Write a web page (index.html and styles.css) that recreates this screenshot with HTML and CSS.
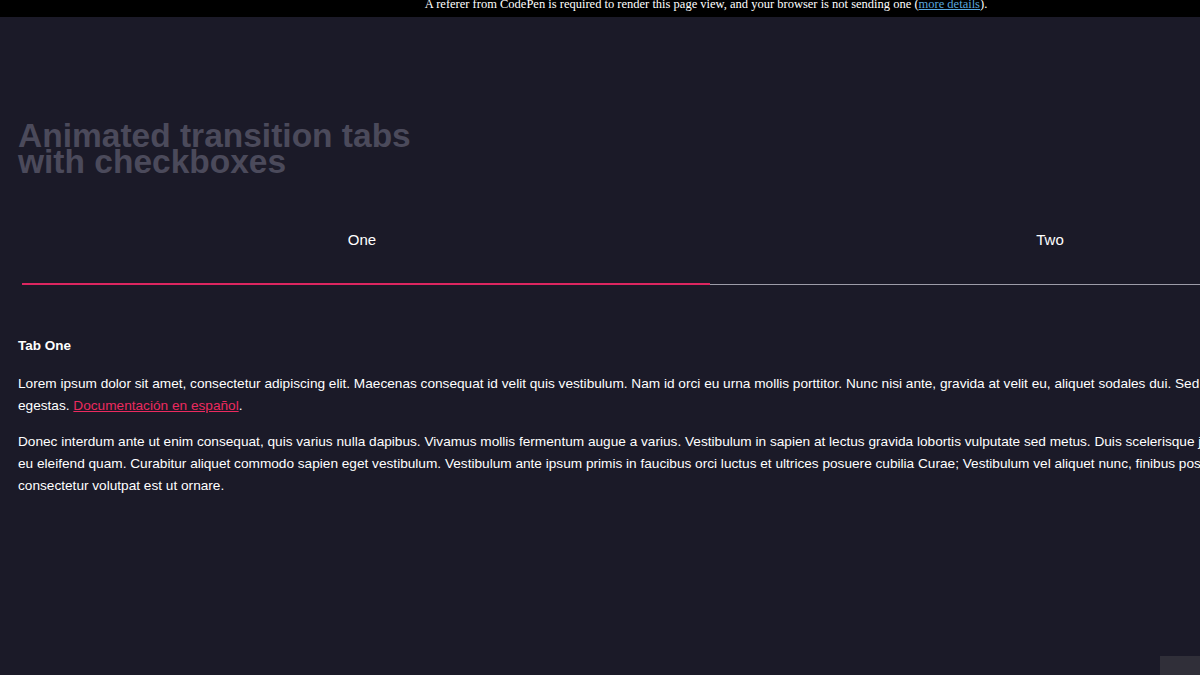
FILE: index.html
```html
<!DOCTYPE html>
<html lang="en">
<head>
<meta charset="utf-8">
<title>Animated transition tabs with checkboxes</title>
<link rel="stylesheet" href="styles.css">
</head>
<body>
<div class="sheet">
  <div class="referer-bar">
    <p class="referer-text">A referer from CodePen is required to render this page view, and your browser is not sending one (<a href="#">more details</a>).</p>
  </div>
  <main class="page">
    <h1 class="title">Animated transition tabs<br>with checkboxes</h1>
    <div class="tabs">
      <input type="checkbox" class="tab-toggle" id="tab-two">
      <div class="tab-labels">
        <span class="tab-label">One</span>
        <label class="tab-label" for="tab-two">Two</label>
      </div>
      <div class="tab-track"><span class="tab-indicator"></span></div>
    </div>
    <section class="panel">
      <h2 class="panel-title">Tab One</h2>
      <p>Lorem ipsum dolor sit amet, consectetur adipiscing elit. Maecenas consequat id velit quis vestibulum. Nam id orci eu urna mollis porttitor. Nunc nisi ante, gravida at velit eu, aliquet sodales dui. Sed laoreet condimentum ut nulla egestas. <a href="#">Documentación en español</a>.</p>
      <p>Donec interdum ante ut enim consequat, quis varius nulla dapibus. Vivamus mollis fermentum augue a varius. Vestibulum in sapien at lectus gravida lobortis vulputate sed metus. Duis scelerisque justo sed lacinia ornare vitae at, eu eleifend quam. Curabitur aliquet commodo sapien eget vestibulum. Vestibulum ante ipsum primis in faucibus orci luctus et ultrices posuere cubilia Curae; Vestibulum vel aliquet nunc, finibus posuere purus. Integer quis consectetur volutpat est ut ornare.</p>
    </section>
  </main>
</div>
<div class="corner-badge"></div>
</body>
</html>
```
FILE: styles.css
```css
html, body {
  margin: 0;
  padding: 0;
  background: #1b1a28;
  overflow: hidden;
}

.sheet {
  width: 1412px;
  min-height: 675px;
  background: #1b1a28;
}

/* black notice strip along the top */
.referer-bar {
  height: 17px;
  background: #000;
  overflow: hidden;
}

.referer-text {
  margin: -4px 0 0;
  text-align: center;
  font-family: "Liberation Serif", "Times New Roman", serif;
  font-size: 12.5px;
  line-height: 16px;
  color: #fff;
}

.referer-text a {
  color: #5aa7df;
}

.page {
  padding: 0 18px;
  font-family: "Liberation Sans", Arial, sans-serif;
  color: #fff;
}

.title {
  margin: 106px 0 0;
  font-size: 33.5px;
  line-height: 26px;
  font-weight: 700;
  color: #4b4a5b;
}

/* tab strip */
.tabs {
  margin: 46px 0 0 4px;
}

.tab-toggle {
  display: none;
}

.tab-labels {
  display: grid;
  grid-template-columns: 680px 696px;
}

.tab-label {
  text-align: center;
  font-size: 15px;
  line-height: 18px;
  padding: 10px 0 35px;
  color: #fff;
  cursor: pointer;
}

.tab-track {
  position: relative;
  height: 1px;
  background: #9d9ca8;
}

.tab-indicator {
  position: absolute;
  left: 0;
  top: -1px;
  width: 688px;
  height: 2px;
  background: #dc2660;
  transition: left 0.3s ease;
}

.tab-toggle:checked ~ .tab-track .tab-indicator {
  left: 688px;
}

/* panel content */
.panel {
  padding-top: 53px;
}

.panel-title {
  margin: 0;
  font-size: 13.5px;
  line-height: 16px;
  font-weight: 700;
}

.panel p {
  margin: 19px 0 0;
  font-size: 13.65px;
  line-height: 22px;
}

.panel p + p {
  margin-top: 14px;
}

.panel a {
  color: #ec2a5f;
}

.corner-badge {
  position: fixed;
  right: 0;
  bottom: 0;
  width: 40px;
  height: 19px;
  background: rgba(90, 90, 90, 0.35);
}
```
